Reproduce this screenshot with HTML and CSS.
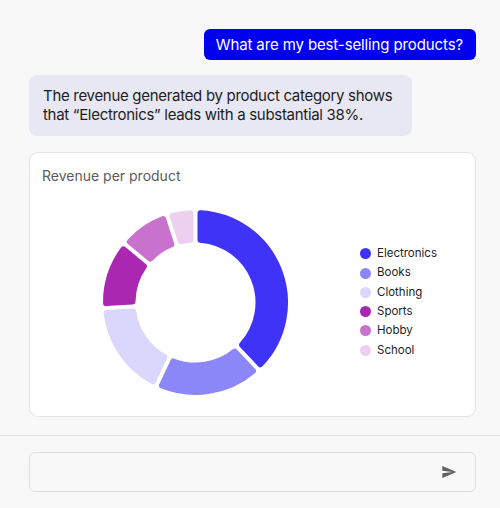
FILE: index.html
```html
<!DOCTYPE html>
<html lang="en">
<head>
<meta charset="utf-8">
<title>Chat</title>
<link rel="stylesheet" href="styles.css">
</head>
<body>
<div class="app">
  <main class="chat">
    <div class="bubble bubble-user">What are my best-selling products?</div>
    <div class="bubble bubble-bot">The revenue generated by product category shows that “Electronics” leads with a substantial 38%.</div>
    <section class="card">
      <h2 class="card-title">Revenue per product</h2>
      <div class="chart">
        <svg class="donut" width="190" height="190" viewBox="100 207 190 190" aria-hidden="true">
          <path class="seg seg-electronics" d="M200.50 213.14 A89.5 89.5 0 0 1 260.32 364.22 L242.13 344.86 A63 63 0 0 0 200.50 239.70 Z"/>
          <path class="seg seg-books" d="M253.03 371.06 A89.5 89.5 0 0 1 161.97 385.48 L173.28 361.45 A63 63 0 0 0 234.85 351.70 Z"/>
          <path class="seg seg-clothing" d="M152.93 381.23 A89.5 89.5 0 0 1 106.63 313.10 L133.14 311.43 A63 63 0 0 0 164.24 357.20 Z"/>
          <path class="seg seg-sports" d="M106.00 303.12 A89.5 89.5 0 0 1 123.46 249.39 L143.92 266.32 A63 63 0 0 0 132.51 301.45 Z"/>
          <path class="seg seg-hobby" d="M129.83 241.69 A89.5 89.5 0 0 1 163.13 219.06 L171.34 244.32 A63 63 0 0 0 150.30 258.62 Z"/>
          <path class="seg seg-school" d="M172.64 215.97 A89.5 89.5 0 0 1 190.50 213.14 L190.50 239.70 A63 63 0 0 0 180.85 241.23 Z"/>
        </svg>
        <ul class="legend">
          <li class="legend-item"><span class="dot dot-electronics"></span>Electronics</li>
          <li class="legend-item"><span class="dot dot-books"></span>Books</li>
          <li class="legend-item"><span class="dot dot-clothing"></span>Clothing</li>
          <li class="legend-item"><span class="dot dot-sports"></span>Sports</li>
          <li class="legend-item"><span class="dot dot-hobby"></span>Hobby</li>
          <li class="legend-item"><span class="dot dot-school"></span>School</li>
        </ul>
      </div>
    </section>
  </main>
  <footer class="composer">
    <div class="input">
      <svg class="send" width="16" height="16" viewBox="0 0 24 24" aria-hidden="true">
        <path d="M2.01 21L23 12 2.01 3 2 10l15 2-15 2z"/>
      </svg>
    </div>
  </footer>
</div>
</body>
</html>
```
FILE: styles.css
```css
* { box-sizing: border-box; }

html, body {
  margin: 0;
  padding: 0;
}

body {
  background: #f8f8f8;
  font-family: Inter, "Noto Sans", "Liberation Sans", sans-serif;
  color: #1d1d22;
}

.app {
  width: 500px;
  height: 508px;
  display: flex;
  flex-direction: column;
}

.chat {
  height: 436px;
  padding: 29px 24px 0 29px;
  border-bottom: 1px solid #e2e2e2;
  display: flex;
  flex-direction: column;
}

.bubble {
  font-size: 15px;
  line-height: 19px;
  border-radius: 6px;
}

.bubble-user {
  align-self: flex-end;
  background: #0000ee;
  color: #ffffff;
  padding: 6px 13px 6px 12px;
  letter-spacing: -0.12px;
}

.bubble-bot {
  align-self: flex-start;
  width: 383px;
  margin-top: 15px;
  background: #e7e8f4;
  color: #1d1d22;
  padding: 11px 10px 12px 14px;
  border-radius: 8px;
  letter-spacing: -0.3px;
}

.card {
  margin-top: 16px;
  background: #ffffff;
  border: 1px solid #e4e4e4;
  border-radius: 9px;
  padding: 13px 12px 19px;
}

.card-title {
  margin: 0;
  font-size: 14px;
  line-height: 20px;
  font-weight: 400;
  color: #5b5b5b;
}

.chart {
  display: flex;
  align-items: center;
  margin-top: 21px;
}

.donut {
  display: block;
  margin-left: 58px;
  flex: none;
}

.seg {
  stroke-width: 6;
  stroke-linejoin: round;
}

.seg-electronics { fill: #3f33f8; stroke: #3f33f8; }
.seg-books { fill: #8c87f9; stroke: #8c87f9; }
.seg-clothing { fill: #d9d7fc; stroke: #d9d7fc; }
.seg-sports { fill: #a927b1; stroke: #a927b1; }
.seg-hobby { fill: #c872cd; stroke: #c872cd; }
.seg-school { fill: #edd0ef; stroke: #edd0ef; }

.legend {
  list-style: none;
  margin: 0 0 0 70px;
  padding: 0;
}

.legend-item {
  display: flex;
  align-items: center;
  gap: 6px;
  font-size: 11.5px;
  line-height: 19.3px;
  color: #222226;
}

.dot {
  width: 11px;
  height: 11px;
  border-radius: 50%;
  flex: none;
}

.dot-electronics { background: #3f33f8; }
.dot-books { background: #8c87f9; }
.dot-clothing { background: #d9d7fc; }
.dot-sports { background: #a927b1; }
.dot-hobby { background: #c872cd; }
.dot-school { background: #edd0ef; }

.composer {
  padding: 16px 24px 0 29px;
}

.input {
  height: 40px;
  border: 1px solid #dedede;
  border-radius: 6px;
  background: #f8f8f8;
  display: flex;
  align-items: center;
  justify-content: flex-end;
  padding-right: 18px;
}

.send {
  display: block;
  fill: #5f5f5f;
}
```
